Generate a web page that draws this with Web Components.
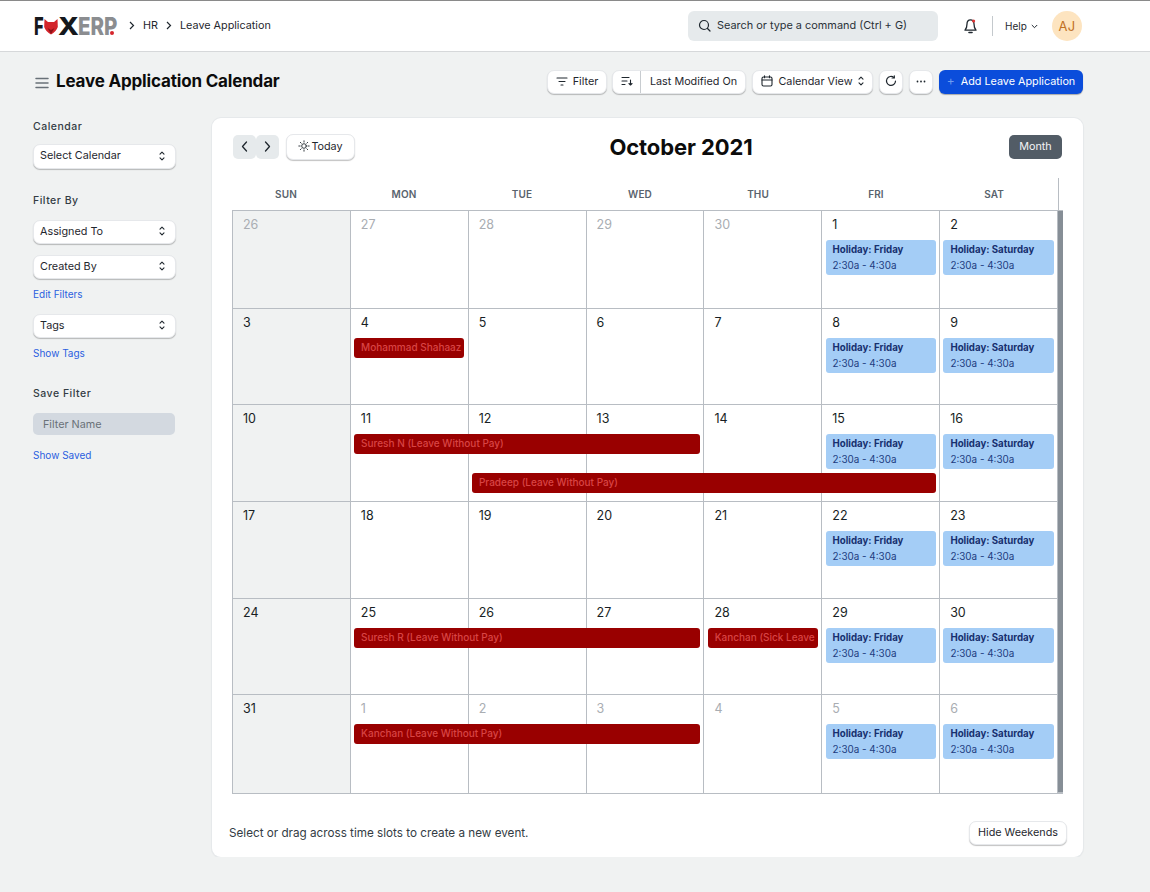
<!DOCTYPE html>
<html>
<head>
<meta charset="utf-8">
<title>Leave Application Calendar</title>
<style>
  html, body { margin: 0; padding: 0; }
  body { background: #f0f2f2; font-family: Inter, "Liberation Sans", sans-serif; color: #1f272e; }
  .page { display: flex; padding: 0 67px 0 33px; gap: 36px; }
</style>
</head>
<body>
<top-nav></top-nav>
<page-head></page-head>
<div class="page">
  <side-bar></side-bar>
  <cal-card></cal-card>
</div>

<script>
// small helper, every component just sets its html in the shadow root
class Base extends HTMLElement {
  constructor() {
    super();
    this.attachShadow({ mode: 'open' });
  }
}

const chevUpDown = `<svg width="6" height="10" viewBox="0 0 6 10" fill="none" stroke="#1f272e" stroke-width="1.100" stroke-linecap="round" stroke-linejoin="round"><path d="M1 3.200 3 1.200 5 3.200"/><path d="M1 6.800 3 8.800 5 6.800"/></svg>`;

class AppButton extends Base {
  connectedCallback() {
    this.shadowRoot.innerHTML = `
      <style>
        :host { display: inline-flex; }
        .b {
          display: flex; align-items: center; justify-content: center; gap: var(--gap, 5px); box-sizing: border-box;
          width: var(--w, auto); height: var(--h, 24px); background: #fff; border: 1px solid #e6e8eb; border-radius: 7px; font-size: 10.800px;
          color: #1f272e; white-space: nowrap; padding-bottom: 1px;
          box-shadow: 0 1px 1px rgba(0,0,0,.24);
        }
      </style>
      <div class="b"><slot></slot></div>`;
  }
}
customElements.define('app-button', AppButton);

class TopNav extends Base {
  connectedCallback() {
    this.shadowRoot.innerHTML = `
      <style>
        :host { display: flex; align-items: center; box-sizing: border-box; height: 52px; background: #fff;
          border-top: 1px solid #8a8a8a; border-bottom: 1px solid #d6d8da; padding: 0 68px 0 34px; }
        .logo { display: flex; align-items: center; width: 83px; height: 20px; font: 800 25px/20px Inter, "Liberation Sans", sans-serif; color: #15181c; position: relative; }
        .logo span { display: block; height: 20px; }
        .logo span b { display: inline-block; font-weight: 800; transform-origin: 0 50%; }
        .logo i { position: absolute; left: 76px; top: 15px; width: 4px; height: 4px; background: #d5252c; border-radius: 50%; }
        .crumbs { display: flex; align-items: center; margin: -1px 0 0 12px; color: #1f272e; font-size: 10.800px; }
        .crumbs svg { margin-right: 8px; }
        .crumbs span { margin-right: 8px; }
        .search { margin-left: auto; display: flex; align-items: center; gap: 6px; box-sizing: border-box; width: 250px; height: 30px; padding: 0 0 1px 10px; background: #e6eaec; border-radius: 6px; font-size: 10.900px; color: #2a3138; }
        .search span { margin-top: -1px; }
        .bell { margin-left: 26px; display: flex; }
        .sep { width: 1px; height: 20px; background: #c4c9cd; margin: 0 12px 0 15px; }
        .help { display: flex; align-items: center; gap: 4px; width: 33px; font-size: 10px; margin-right: 14px; white-space: nowrap; }
        .av { width: 30px; height: 30px; border-radius: 50%; background: #fde4c0; color: #c0701f; display: flex; align-items: center; justify-content: center; font-size: 13px; letter-spacing: .3px; }
      </style>
      <div class="logo">
        <span style="width:10px"><b style="transform:scaleX(.66)">F</b></span>
        <svg width="14" height="17" viewBox="0 0 14 17"><path d="M.5 1 4 4h6l3.500-3 .3 8Q12 14 7 16.500 2 14 .2 9Z" fill="#d3242b"/><path d="M3.500 10 7 12l3.500-2L7 16Z" fill="#8c1218"/></svg>
        <span style="width:20px"><b style="transform:scaleX(1.100)">X</b></span>
        <span style="width:39px;color:#8b8d90"><b style="transform:scaleX(.82)">ERP</b></span>
        <i></i>
      </div>
      <div class="crumbs">
        <svg width="6" height="9" viewBox="0 0 6 9" fill="none" stroke="#1f272e" stroke-width="1.200"><path d="M1 1l3.500 3.500L1 8"/></svg><span>HR</span>
        <svg width="6" height="9" viewBox="0 0 6 9" fill="none" stroke="#1f272e" stroke-width="1.200"><path d="M1 1l3.500 3.500L1 8"/></svg><span>Leave Application</span>
      </div>
      <div class="search">
        <svg width="13" height="13" viewBox="0 0 13 13" fill="none" stroke="#1f272e" stroke-width="1.200" stroke-linecap="round"><circle cx="6" cy="6" r="4.500"/><path d="M9.500 9.500 12 12"/></svg>
        <span>Search or type a command (Ctrl + G)</span>
      </div>
      <div class="bell"><svg width="13" height="16" viewBox="0 0 13 16" fill="none" stroke="#1f272e" stroke-width="1.300" stroke-linejoin="round"><path d="M6.500 1.800C4.300 1.800 3 3.500 3 6c0 3-.8 4.800-2 6.200h11c-1.200-1.400-2-3.200-2-6.200 0-2.500-1.300-4.200-3.500-4.200Z"/><path d="M5 14.500h3" stroke-linecap="round" stroke-width="1.600"/><circle cx="9.600" cy="3" r="1.600" fill="#e03636" stroke="none"/></svg></div>
      <div class="sep"></div>
      <div class="help">Help <svg width="7" height="5" viewBox="0 0 7 5" fill="none" stroke="#1f272e" stroke-width="1"><path d="M.8 1 3.500 3.700 6.200 1"/></svg></div>
      <div class="av">AJ</div>`;
  }
}
customElements.define('top-nav', TopNav);

class PageHead extends Base {
  connectedCallback() {
    this.shadowRoot.innerHTML = `
      <style>
        :host { display: flex; align-items: center; box-sizing: border-box; height: 66px; padding: 0 67px 7px 35px; }
        .burger { display: flex; margin: 2px 8px 0 0; }
        h1 { margin: 0 0 2px -1px; font-size: 17px; font-weight: 700; letter-spacing: -.17px; color: #0c0c0c; }
        .actions { margin-left: auto; display: flex; gap: 6px; align-items: center; }
        .grp { display: flex; box-sizing: border-box; width: 134px; height: 24px; background: #fff; border: 1px solid #e6e8eb; border-radius: 7px; font-size: 10.800px; box-shadow: 0 1px 1px rgba(0,0,0,.24); }
        .grp div { display: flex; align-items: center; justify-content: center; padding-bottom: 1px; }
        .grp .ic { width: 28px; border-right: 1px solid #c8ccd0; box-sizing: border-box; }
        .grp .t { flex: 1; padding-left: 1px; }
        .add { display: flex; align-items: center; justify-content: center; gap: 6px; width: 144px; height: 24px; box-sizing: border-box; background: #0b4ddb; color: #fff; font-size: 10.800px; padding-bottom: 1px; border-radius: 6px; box-shadow: 0 1px 1px rgba(0,0,0,.3); }
        .add b { color: #6f9cf0; font-weight: 400; font-size: 12px; line-height: 1; }
      </style>
      <div class="burger"><svg width="14" height="12" viewBox="0 0 14 12" stroke="#687178" stroke-width="1.500" stroke-linecap="round"><path d="M1 1.500h12M1 6h12M1 10.500h12"/></svg></div>
      <h1>Leave Application Calendar</h1>
      <div class="actions">
        <app-button style="--w:60px;margin-right:-1px"><svg width="12" height="9" viewBox="0 0 12 9" stroke="#1f272e" stroke-width="1.100" stroke-linecap="round"><path d="M1 1h10M3 4.500h6M5 8h2"/></svg>Filter</app-button>
        <div class="grp">
          <div class="ic"><svg width="12" height="10" viewBox="0 0 12 10" fill="none" stroke="#1f272e" stroke-width="1.100" stroke-linecap="round" stroke-linejoin="round"><path d="M1 1.500h7M1 5h5M1 8.500h3M9.500 4v5M8 7.500 9.500 9 11 7.500"/></svg></div>
          <div class="t">Last Modified On</div>
        </div>
        <app-button style="--w:121px"><svg width="12" height="12" viewBox="0 0 12 12" fill="none" stroke="#1f272e" stroke-width="1.100"><rect x="1" y="2" width="10" height="9" rx="1.500"/><path d="M1 5h10M3.500 .8v2M8.500 .8v2" stroke-linecap="round"/></svg>Calendar View ${chevUpDown}</app-button>
        <app-button style="--w:24px"><svg width="12" height="12" viewBox="0 0 12 12" fill="none" stroke="#1f272e" stroke-width="1.200" stroke-linecap="round" stroke-linejoin="round"><path d="M10.500 6A4.500 4.500 0 1 1 9 2.600"/><path d="M9.300 .8v2.200H7.100"/></svg></app-button>
        <app-button style="--w:24px"><svg width="10" height="3" viewBox="0 0 10 3" fill="#1f272e"><circle cx="1.500" cy="1.500" r=".9"/><circle cx="5" cy="1.500" r=".9"/><circle cx="8.500" cy="1.500" r=".9"/></svg></app-button>
        <div class="add"><b>+</b>Add Leave Application</div>
      </div>`;
  }
}
customElements.define('page-head', PageHead);

class SelBox extends Base {
  connectedCallback() {
    this.shadowRoot.innerHTML = `
      <style>
        :host { display: flex; align-items: center; justify-content: space-between; box-sizing: border-box; width: 143px; height: 24.500px; padding: 0 10px 1px 6px; background: #fff; border: 1px solid #e6e8eb; border-radius: 7px; font-size: 10.800px; color: #1f272e;
          box-shadow: 0 1px 1px rgba(0,0,0,.24); }
      </style>
      <span><slot></slot></span>${chevUpDown}`;
  }
}
customElements.define('sel-box', SelBox);

class SideBar extends Base {
  connectedCallback() {
    this.shadowRoot.innerHTML = `
      <style>
        :host { display: flex; flex-direction: column; width: 143px; flex: none; padding-top: 1px; }
        .lbl { font-size: 10.500px; font-weight: 500; letter-spacing: .5px; color: #333c44; line-height: 14px; }
        .lnk { font-size: 10px; color: #2b5fe0; line-height: 14px; }
        .inp { display: flex; align-items: center; box-sizing: border-box; width: 142px; height: 22px; border-radius: 5px; background: #d3d9e0; padding-left: 10px; font-size: 10.800px; color: #6a7178; }
      </style>
      <div class="lbl" style="margin-top:1px">Calendar</div>
      <sel-box style="margin-top:10px">Select Calendar</sel-box>
      <div class="lbl" style="margin-top:25px">Filter By</div>
      <sel-box style="margin-top:12px">Assigned To</sel-box>
      <sel-box style="margin-top:10.500px">Created By</sel-box>
      <div class="lnk" style="margin-top:7.500px">Edit Filters</div>
      <sel-box style="margin-top:13px">Tags</sel-box>
      <div class="lnk" style="margin-top:8px">Show Tags</div>
      <div class="lbl" style="margin-top:27px">Save Filter</div>
      <div class="inp" style="margin-top:12px">Filter Name</div>
      <div class="lnk" style="margin-top:13px">Show Saved</div>`;
  }
}
customElements.define('side-bar', SideBar);

class CalEvent extends Base {
  connectedCallback() {
    const holiday = this.hasAttribute('time');
    this.shadowRoot.innerHTML = `
      <style>
        :host { display: block; align-self: start; min-width: 0; overflow: hidden; box-sizing: border-box; border-radius: 3px; white-space: nowrap; margin: 0 4.300px 0 3.250px; z-index: 1; }
        :host([time]) { background: #a4cdf6; color: #1d3c80; height: 34.500px; padding: 3px 6px 0 7px; line-height: 14px; font-size: 9.900px; }
        :host(:not([time])) { background: #990000; color: #d84444; height: 19.500px; padding-left: 7px; line-height: 19.500px; font-size: 10px; font-weight: 500; }
        b { font-weight: 700; font-size: 9.700px; line-height: 14.500px; color: #17306f; display: block; }
      </style>
      ${holiday ? `<b>${this.getAttribute('label')}</b>${this.getAttribute('time')}` : this.getAttribute('label')}`;
  }
}
customElements.define('cal-event', CalEvent);

class CalWeek extends Base {
  connectedCallback() {
    const start = +this.getAttribute('start');  // sunday date
    const muted = (this.getAttribute('muted') || '').split(',').filter(Boolean).map(Number);
    const len = +this.getAttribute('len') || 31;
    let cells = '';
    for (let i = 0; i < 7; i++) {
      let d = start + i;
      if (d > len) d -= len;
      const off = muted.includes(i);
      cells += `<div class="cell${i === 0 ? ' sun' : ''}" style="grid-column:${i + 1}"><span class="${off ? 'off' : ''}">${d}</span></div>`;
    }
    this.shadowRoot.innerHTML = `
      <style>
        :host { display: grid; grid-template-columns: repeat(7, 1fr); grid-template-rows: 29px 39px 20px 1fr; }
        .cell { grid-row: 1 / -1; box-sizing: border-box; border-right: 1px solid #b8bdc3; border-bottom: 1px solid #b8bdc3; padding: 6px 0 0 10px; font-size: 12.500px; line-height: 16px; color: #181e24; min-width: 0; }
        .sun { background: #f0f2f2; }
        .off { color: #a9adb2; }
      </style>
      ${cells}<slot></slot>`;
  }
}
customElements.define('cal-week', CalWeek);

class CalCard extends Base {
  connectedCallback() {
    const hol = `<cal-event label="Holiday: Friday" time="2:30a - 4:30a" style="grid-column:6;grid-row:2"></cal-event>` +
      `<cal-event label="Holiday: Saturday" time="2:30a - 4:30a" style="grid-column:7;grid-row:2"></cal-event>`;
    const leave = (label, from, to, row = 2) => `<cal-event label="${label}" style="grid-column:${from} / ${to};grid-row:${row}"></cal-event>`;
    this.shadowRoot.innerHTML = `
      <style>
        :host { display: block; box-sizing: border-box; width: 871px; height: 739px; background: #fff; border-radius: 9px; padding: 15px 0 0 20px; box-shadow: 0 0 0 1px #e6e9eb, 0 1px 2px rgba(0,0,0,.08); }
        .tools { display: grid; grid-template-columns: 1fr auto 1fr; align-items: center; width: 830px; height: 26px; }
        .left { display: flex; align-items: center; gap: 7px; margin-left: 1px; }
        .nav { display: flex; height: 24px; }
        .nav div { width: 23px; background: #e6eaec; display: flex; align-items: center; justify-content: center; border-radius: 5px; }
        .title { font-size: 22px; font-weight: 700; letter-spacing: -.1px; color: #0c0c0c; margin: 1px 0 0 68px; }
        .month { justify-self: end; display: flex; align-items: center; justify-content: center; width: 53px; height: 24px; padding-bottom: 1px; box-sizing: border-box; border-radius: 5px; background: #525c66; color: #f4f5f6; font-size: 10.800px; }
        .head { display: grid; grid-template-columns: repeat(7, 118px); width: 832px; height: 32px; margin: 19px 0 0 -5px; box-sizing: border-box; border-right: 1px solid #b8bdc3; }
        .head div { text-align: center; font-size: 10px; font-weight: 600; color: #59636d; line-height: 32px; letter-spacing: .1px; }
        .wrap { display: flex; width: 831px; height: 584px; border-top: 1px solid #b8bdc3; border-left: 1px solid #b8bdc3; box-sizing: border-box; }
        .weeks { display: grid; width: 825px; flex: none; grid-template-rows: 98px 96px 97px 97px 96px 99px; }
        .bar { width: 5px; flex: none; background: #868e96; background-clip: padding-box; border-bottom: 2px solid #b8bdc3; box-sizing: border-box; }
        .foot { display: flex; align-items: center; justify-content: space-between; width: 838px; margin: 27px 0 0 -3px; height: 24px; font-size: 11.700px; color: #333c44; }
      </style>
      <div class="tools">
        <div class="left">
          <div class="nav">
            <div><svg width="7" height="11" viewBox="0 0 7 11" fill="none" stroke="#1f272e" stroke-width="1.300" stroke-linecap="round" stroke-linejoin="round"><path d="M5.500 1 1.500 5.500 5.500 10"/></svg></div>
            <div><svg width="7" height="11" viewBox="0 0 7 11" fill="none" stroke="#1f272e" stroke-width="1.300" stroke-linecap="round" stroke-linejoin="round"><path d="M1.500 1 5.500 5.500 1.500 10"/></svg></div>
          </div>
          <app-button style="--w:69px;--h:26px;--gap:1px"><svg width="12" height="12" viewBox="0 0 12 12" fill="none" stroke="#1f272e" stroke-width=".9" stroke-linecap="round"><circle cx="6" cy="6" r="2.300"/><path d="M6 .8v1.300M6 9.900v1.300M.8 6h1.300M9.900 6h1.300M2.300 2.300l.9.900M8.800 8.800l.9.900M2.300 9.700l.9-.9M8.800 3.200l.9-.9"/></svg>Today</app-button>
        </div>
        <div class="title">October 2021</div>
        <div class="month">Month</div>
      </div>
      <div class="head"><div>SUN</div><div>MON</div><div>TUE</div><div>WED</div><div>THU</div><div>FRI</div><div>SAT</div></div>
      <div class="wrap">
        <div class="weeks">
          <cal-week start="26" len="30" muted="0,1,2,3,4">${hol}</cal-week>
          <cal-week start="3">${leave('Mohammad Shahaaz', 2, 3)}${hol}</cal-week>
          <cal-week start="10">${leave('Suresh N (Leave Without Pay)', 2, 5)}${hol}${leave('Pradeep (Leave Without Pay)', 3, 7, 3)}</cal-week>
          <cal-week start="17">${hol}</cal-week>
          <cal-week start="24">${leave('Suresh R (Leave Without Pay)', 2, 5)}${leave('Kanchan (Sick Leave', 5, 6)}${hol}</cal-week>
          <cal-week start="31" muted="1,2,3,4,5,6">${leave('Kanchan (Leave Without Pay)', 2, 5)}${hol}</cal-week>
        </div>
        <div class="bar"></div>
      </div>
      <div class="foot"><span>Select or drag across time slots to create a new event.</span><app-button style="--w:98px">Hide Weekends</app-button></div>`;
  }
}
customElements.define('cal-card', CalCard);
</script>
</body>
</html>
